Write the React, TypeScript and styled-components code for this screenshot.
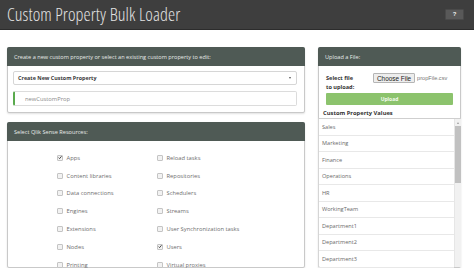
import React from "react";
import styled, { createGlobalStyle } from "styled-components";

const Global = createGlobalStyle`
  html, body { margin: 0; padding: 0; background: #ffffff; }
  body { font-family: "Open Sans", "Liberation Sans", Arial, sans-serif; overflow: hidden; }
  * { box-sizing: border-box; }
`;

const Page = styled.div`
  width: 474px;
  height: 268px;
  overflow: hidden;
  display: flex;
  flex-direction: column;
`;

const TopBar = styled.header`
  height: 30px;
  background: #3e3e3e;
  border-bottom: 1px solid #2c2c2c;
  display: flex;
  align-items: center;
  justify-content: space-between;
  padding: 0 10px 0 7px;
  flex-shrink: 0;
`;

const Title = styled.h1`
  margin: 0;
  font-family: "Open Sans", "Liberation Sans", sans-serif;
  font-weight: 350;
  font-size: 18px;
  font-stretch: 75%;
  letter-spacing: 0.1px;
  color: #e2e2e2;
  line-height: 1;
  margin-top: -1px;
`;

const HelpButton = styled.button`
  width: 19px;
  height: 11px;
  margin-top: -1px;
  border: 1px solid #4a4a4a;
  border-radius: 1px;
  background: #595959;
  color: #f0f0f0;
  font-size: 6px;
  font-weight: 700;
  padding: 0;
  line-height: 9px;
  font-family: "Liberation Sans", sans-serif;
`;

const Main = styled.main`
  flex: 1;
  display: grid;
  grid-template-columns: 298px 143px;
  column-gap: 13px;
  padding: 17px 0 0 7px;
  min-height: 0;
`;

const Column = styled.div`
  display: flex;
  flex-direction: column;
  gap: 9px;
  min-height: 0;
`;

const Panel = styled.section<{ $grow?: boolean }>`
  border: 1px solid #c9c9c9;
  border-radius: 2px;
  background: #fff;
  box-shadow: 0 1px 2px rgba(0, 0, 0, 0.12);
  display: flex;
  flex-direction: column;
  ${(p) => (p.$grow ? "flex: 1; min-height: 0;" : "")}
`;

const PanelHeader = styled.div`
  height: 19px;
  flex-shrink: 0;
  background: #4f5a55;
  color: #e8ecea;
  font-size: 5.6px;
  display: flex;
  align-items: center;
  padding: 0 7px;
  border-radius: 2px 2px 0 0;
  margin: -1px -1px 0;
`;

const PanelBody = styled.div`
  padding: 5px 7px 6px 5px;
  display: flex;
  flex-direction: column;
`;

const SelectBox = styled.div`
  height: 14px;
  border: 1px solid #d6d6d6;
  border-radius: 2px;
  display: flex;
  align-items: center;
  justify-content: space-between;
  padding: 0 5px 0 4px;
  font-size: 5.4px;
  font-weight: 700;
  color: #3a3a3a;
`;

const Caret = styled.span`
  width: 0;
  height: 0;
  border-left: 1.5px solid transparent;
  border-right: 1.5px solid transparent;
  border-top: 2px solid #555;
`;

const TextInput = styled.div`
  margin-top: 6px;
  height: 15px;
  border: 1px solid #dcdcdc;
  border-left: 2px solid #5aaa4e;
  border-radius: 2px;
  display: flex;
  align-items: center;
  padding-left: 10px;
  font-size: 5.8px;
  color: #8a8a8a;
`;

const CheckGrid = styled.div`
  display: grid;
  grid-template-columns: 100px 130px;
  grid-auto-flow: column;
  grid-template-rows: repeat(7, 17.8px);
  padding: 8px 0 0 49px;
`;

const CheckItem = styled.label`
  display: flex;
  align-items: center;
  gap: 3.5px;
  font-size: 5.8px;
  color: #6e6e6e;
`;

const Box = styled.span`
  width: 6px;
  height: 6px;
  border: 1px solid #c4c4c4;
  border-radius: 1px;
  background: #f2f2f2;
  display: inline-flex;
  align-items: center;
  justify-content: center;
  flex-shrink: 0;
`;

const UploadBody = styled.div`
  padding: 6px 7px 0 7px;
  display: flex;
  flex-direction: column;
`;

const FileRow = styled.div`
  display: flex;
  align-items: flex-start;
  height: 21px;
`;

const FileLabel = styled.div`
  width: 47px;
  font-size: 5.6px;
  font-weight: 700;
  color: #333;
  line-height: 9px;
  padding-top: 2px;
`;

const ChooseButton = styled.span`
  height: 10px;
  padding: 0 3px;
  border: 1px solid #b5b5b5;
  border-radius: 1px;
  background: #ededed;
  font-family: "Liberation Sans", sans-serif;
  font-size: 6.4px;
  color: #222;
  display: inline-flex;
  align-items: center;
  margin-top: 1px;
`;

const FileName = styled.span`
  font-family: "Liberation Sans", sans-serif;
  font-size: 5.6px;
  color: #777;
  margin-left: 2px;
  margin-top: 3px;
`;

const UploadButton = styled.div`
  height: 12px;
  background: #8cc36d;
  border-radius: 1px;
  color: #f3fbef;
  font-size: 5px;
  font-weight: 700;
  display: flex;
  align-items: center;
  justify-content: center;
`;

const ValuesTitle = styled.div`
  margin: 4px 0 0 -3px;
  font-size: 5.8px;
  font-weight: 700;
  color: #333;
  height: 8px;
  line-height: 8px;
`;

const ListBox = styled.div`
  margin: 1px -1px 0;
  flex: 1;
  border-top: 1px solid #cfcfcf;
  display: flex;
  min-height: 0;
`;

const ListRows = styled.ul`
  list-style: none;
  margin: 0;
  padding: 0;
  flex: 1;
  border-left: 1px solid #d5d5d5;
`;

const ListRow = styled.li`
  height: 16.5px;
  border-bottom: 1px solid #e8e8e8;
  display: flex;
  align-items: center;
  padding-left: 3px;
  font-size: 5.6px;
  color: #6a6a6a;
`;

const ScrollTrack = styled.div`
  width: 7px;
  background: #f1f1f1;
  border-left: 1px solid #e6e6e6;
  display: flex;
  flex-direction: column;
  align-items: center;
`;

const ScrollArrow = styled.span`
  margin-top: 3px;
  width: 0;
  height: 0;
  border-left: 1.5px solid transparent;
  border-right: 1.5px solid transparent;
  border-bottom: 2px solid #9a9a9a;
`;

const ScrollThumb = styled.div`
  margin-top: 2px;
  width: 6px;
  height: 57px;
  background: #c1c1c1;
`;

const Check = () => (
  <svg width="5" height="5" viewBox="0 0 10 10">
    <path d="M1.5 5.2 L4 7.8 L8.8 1.8" fill="none" stroke="#333" strokeWidth="2.2" />
  </svg>
);

const resources: [string, boolean][] = [
  ["Apps", true],
  ["Content libraries", false],
  ["Data connections", false],
  ["Engines", false],
  ["Extensions", false],
  ["Nodes", false],
  ["Printing", false],
  ["Reload tasks", false],
  ["Repositories", false],
  ["Schedulers", false],
  ["Streams", false],
  ["User Synchronization tasks", false],
  ["Users", true],
  ["Virtual proxies", false],
];

const values = [
  "Sales",
  "Marketing",
  "Finance",
  "Operations",
  "HR",
  "WorkingTeam",
  "Department1",
  "Department2",
  "Department3",
];

export default function App() {
  return (
    <Page>
      <Global />
      <TopBar>
        <Title>Custom Property Bulk Loader</Title>
        <HelpButton>?</HelpButton>
      </TopBar>
      <Main>
        <Column>
          <Panel>
            <PanelHeader>
              Create a new custom property or select an existing custom property to edit:
            </PanelHeader>
            <PanelBody>
              <SelectBox>
                <span>Create New Custom Property</span>
                <Caret />
              </SelectBox>
              <TextInput>newCustomProp</TextInput>
            </PanelBody>
          </Panel>
          <Panel $grow>
            <PanelHeader>Select Qlik Sense Resources:</PanelHeader>
            <CheckGrid>
              {resources.map(([name, on]) => (
                <CheckItem key={name}>
                  <Box>{on && <Check />}</Box>
                  {name}
                </CheckItem>
              ))}
            </CheckGrid>
          </Panel>
        </Column>
        <Column>
          <Panel $grow>
            <PanelHeader>Upload a File:</PanelHeader>
            <UploadBody>
              <FileRow>
                <FileLabel>
                  Select file
                  <br />
                  to upload:
                </FileLabel>
                <ChooseButton>Choose File</ChooseButton>
                <FileName>propFile.csv</FileName>
              </FileRow>
              <UploadButton>Upload</UploadButton>
              <ValuesTitle>Custom Property Values</ValuesTitle>
            </UploadBody>
            <ListBox>
              <ListRows>
                {values.map((v) => (
                  <ListRow key={v}>{v}</ListRow>
                ))}
              </ListRows>
              <ScrollTrack>
                <ScrollArrow />
                <ScrollThumb />
              </ScrollTrack>
            </ListBox>
          </Panel>
        </Column>
      </Main>
    </Page>
  );
}
